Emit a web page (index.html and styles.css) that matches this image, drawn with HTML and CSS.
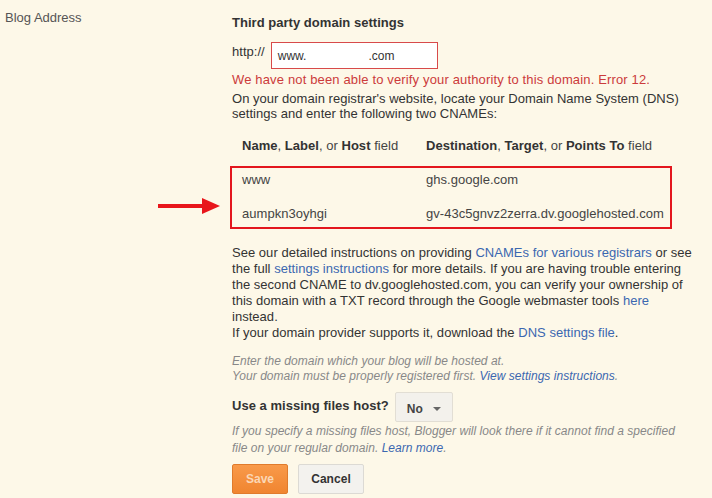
FILE: index.html
```html
<!DOCTYPE html>
<html>
<head>
<meta charset="utf-8">
<link rel="stylesheet" href="styles.css">
</head>
<body>
<div class="page">
  <div class="label">Blog Address</div>
  <div class="main">
    <div class="title">Third party domain settings</div>
    <div class="url-row">
      <span class="proto">http://</span>
      <div class="url-input"><span class="www">www.</span><span class="com">.com</span></div>
    </div>
    <div class="error">We have not been able to verify your authority to this domain. Error 12.</div>
    <p class="para p1">On your domain registrar's website, locate your Domain Name System (DNS)<br>settings and enter the following two CNAMEs:</p>
    <div class="thead">
      <div class="c1"><b>Name</b>, <b>Label</b>, or <b>Host</b> field</div>
      <div class="c2"><b>Destination</b>, <b>Target</b>, or <b>Points To</b> field</div>
    </div>
    <div class="records">
      <svg class="arrow" width="62" height="16" viewBox="0 0 62 16"><rect x="0" y="6" width="46" height="4" fill="#e8161b"/><polygon points="44,0 62,8 44,16" fill="#e8161b"/></svg>
      <div class="rec">
        <div class="c1">www</div>
        <div class="c2">ghs.google.com</div>
      </div>
      <div class="rec">
        <div class="c1">aumpkn3oyhgi</div>
        <div class="c2">gv-43c5gnvz2zerra.dv.googlehosted.com</div>
      </div>
    </div>
    <p class="para p2">See our detailed instructions on providing <a>CNAMEs for various registrars</a> or see<br>the full <a>settings instructions</a> for more details. If you are having trouble entering<br>the second CNAME to dv.googlehosted.com, you can verify your ownership of<br>this domain with a TXT record through the Google webmaster tools <a>here</a><br>instead.<br>If your domain provider supports it, download the <a>DNS settings file</a>.</p>
    <p class="hint h1">Enter the domain which your blog will be hosted at.<br>Your domain must be properly registered first. <a>View settings instructions</a>.</p>
    <div class="missing">
      <span class="mtitle">Use a missing files host?</span>
      <div class="dropdown"><span>No</span><span class="caret"></span></div>
    </div>
    <p class="hint h2">If you specify a missing files host, Blogger will look there if it cannot find a specified<br>file on your regular domain. <a>Learn more</a>.</p>
    <div class="buttons">
      <div class="btn save">Save</div>
      <div class="btn cancel">Cancel</div>
    </div>
  </div>
</div>
</body>
</html>
```
FILE: styles.css
```css
html, body {
  margin: 0;
  padding: 0;
  background: #fdf8e8;
}
body {
  font-family: "Liberation Sans", Arial, sans-serif;
  font-size: 13px;
  color: #333;
  height: 498px;
  overflow: hidden;
}
.page {
  display: flex;
  padding-top: 10px;
}
.label {
  width: 227px;
  padding-left: 5px;
  color: #555;
  line-height: 16px;
}
.main {
  width: 478px;
  display: flex;
  flex-direction: column;
  letter-spacing: 0.03px;
}
.title {
  font-weight: bold;
  color: #333;
  line-height: 16px;
  margin-top: 5px;
}
.url-row {
  display: flex;
  align-items: center;
  margin-top: 11px;
  gap: 6px;
}
.proto {
  color: #333;
  margin-top: -8px;
}
.url-input {
  width: 165px;
  height: 25px;
  border: 1px solid #d84a4a;
  background: #fff;
  display: flex;
  align-items: center;
  font-size: 12px;
  color: #333;
  box-sizing: content-box;
  letter-spacing: 0;
}
.www { margin-left: 6px; }
.com { margin-left: 62px; }
.error {
  color: #cc3b3b;
  line-height: 16px;
  margin-top: 3px;
  letter-spacing: 0.15px;
}
.para {
  margin: 0;
  line-height: 15px;
  color: #333;
}
.p1 { margin-top: 3px; }
.thead, .rec {
  display: grid;
  grid-template-columns: 184px auto;
  padding-left: 10px;
}
.thead {
  margin-top: 17px;
  line-height: 16px;
  color: #444;
}
.thead b { color: #333; }
.records {
  position: relative;
  margin-top: 12px;
  margin-left: -2px;
  width: 438px;
  border: 2px solid #e3161d;
  padding: 3px 0 5px;
}
.records .rec {
  padding-left: 10px;
  line-height: 17px;
  color: #444;
}
.records .rec + .rec { margin-top: 17px; }
.arrow {
  position: absolute;
  left: -74px;
  top: 30px;
}
a {
  color: #3b67b0;
}
.p2 {
  margin-top: 16px;
  line-height: 16px;
}
.hint {
  margin: 0;
  font-style: italic;
  color: #888;
  font-size: 12px;
  line-height: 15px;
}
.hint a { color: #3b67b0; }
.h1 { margin-top: 13px; }
.missing {
  display: flex;
  align-items: center;
  margin-top: 8px;
  gap: 6px;
}
.mtitle {
  font-weight: bold;
  font-size: 13px;
  color: #333;
  margin-top: -4px;
}
.dropdown {
  width: 58px;
  height: 30px;
  box-sizing: border-box;
  background: #f3f1ec;
  border: 1px solid #e2ded4;
  border-radius: 2px;
  display: flex;
  align-items: center;
  justify-content: center;
  gap: 10px;
  font-weight: bold;
  font-size: 12px;
  color: #444;
  padding-top: 3px;
}
.caret {
  width: 0;
  height: 0;
  border-left: 4px solid transparent;
  border-right: 4px solid transparent;
  border-top: 4px solid #666;
}
.h2 { margin-top: 1px; line-height: 17px; }
.buttons {
  display: flex;
  gap: 10px;
  margin-top: 7px;
}
.btn {
  height: 30px;
  box-sizing: border-box;
  display: flex;
  align-items: center;
  justify-content: center;
  font-weight: bold;
  font-size: 12px;
  border-radius: 2px;
}
.save {
  width: 56px;
  background: linear-gradient(#f99a4a, #f08530);
  border: 1px solid #e07b2c;
  color: #fbd7b5;
}
.cancel {
  width: 66px;
  background: #f3f2ee;
  border: 1px solid #dcdad4;
  color: #333;
}
```
